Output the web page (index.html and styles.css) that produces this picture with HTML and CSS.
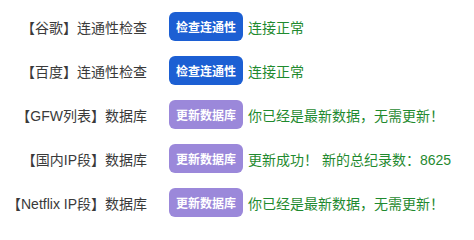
FILE: index.html
```html
<!DOCTYPE html>
<html lang="zh">
<head>
<meta charset="utf-8">
<link rel="stylesheet" href="styles.css">
</head>
<body>
<div class="panel">
  <div class="row">
    <div class="label">【谷歌】连通性检查</div>
    <div class="action"><button class="btn btn-blue">检查连通性</button><span class="msg">连接正常</span></div>
  </div>
  <div class="row">
    <div class="label">【百度】连通性检查</div>
    <div class="action"><button class="btn btn-blue">检查连通性</button><span class="msg">连接正常</span></div>
  </div>
  <div class="row">
    <div class="label">【GFW列表】数据库</div>
    <div class="action"><button class="btn btn-purple">更新数据库</button><span class="msg">你已经是最新数据，无需更新！</span></div>
  </div>
  <div class="row">
    <div class="label">【国内IP段】数据库</div>
    <div class="action"><button class="btn btn-purple">更新数据库</button><span class="msg">更新成功！ 新的总纪录数：8625</span></div>
  </div>
  <div class="row">
    <div class="label">【Netflix IP段】数据库</div>
    <div class="action"><button class="btn btn-purple">更新数据库</button><span class="msg">你已经是最新数据，无需更新！</span></div>
  </div>
</div>
</body>
</html>
```

FILE: styles.css
```css
html, body {
  margin: 0;
  padding: 0;
  background: #ffffff;
}
body {
  font-family: "Liberation Sans", "Noto Sans CJK SC", sans-serif;
  font-size: 14px;
  color: #333333;
  overflow: hidden;
}
.panel {
  display: flex;
  flex-direction: column;
  gap: 15px;
  padding-top: 12px;
}
.row {
  display: grid;
  grid-template-columns: 147px 1fr;
  column-gap: 22px;
  align-items: center;
  height: 29px;
}
.label {
  text-align: right;
  white-space: nowrap;
  color: #3a3a3a;
}
.action {
  display: flex;
  align-items: center;
  gap: 5px;
}
.btn {
  box-sizing: border-box;
  width: 74px;
  height: 29px;
  border: none;
  border-radius: 6px;
  padding: 0;
  color: #ffffff;
  font-family: "Noto Sans CJK SC", sans-serif;
  font-size: 12px;
  font-weight: 700;
  line-height: 29px;
  text-align: center;
}
.btn-blue {
  background: #1c5fd3;
}
.btn-purple {
  background: #9b88da;
}
.msg {
  color: #1f8a2f;
  white-space: nowrap;
}
```
